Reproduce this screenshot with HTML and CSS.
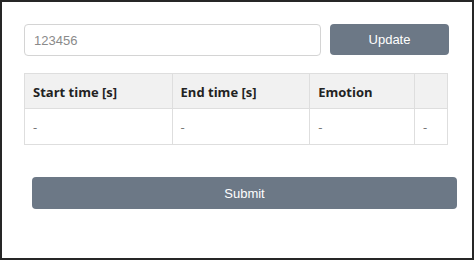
FILE: index.html
```html
<!DOCTYPE html>
<html>
<head>
<meta charset="utf-8">
<link rel="stylesheet" href="styles.css">
</head>
<body>
<div class="frame">
  <div class="search-row">
    <input class="id-input" type="text" placeholder="123456">
    <button class="btn btn-update">Update</button>
  </div>
  <table class="grid">
    <thead>
      <tr>
        <th class="c1">Start time [s]</th>
        <th class="c2">End time [s]</th>
        <th class="c3">Emotion</th>
        <th class="c4"></th>
      </tr>
    </thead>
    <tbody>
      <tr>
        <td>-</td>
        <td>-</td>
        <td>-</td>
        <td>-</td>
      </tr>
    </tbody>
  </table>
  <button class="btn btn-submit">Submit</button>
</div>
</body>
</html>
```
FILE: styles.css
```css
html, body {
  margin: 0;
  padding: 0;
  background: #ffffff;
}
.frame {
  width: 474px;
  height: 260px;
  box-sizing: border-box;
  border: 2px solid #262626;
  padding: 22px 0 0 22px;
  font-family: "Liberation Sans", Arial, sans-serif;
}
.search-row {
  display: flex;
  gap: 9px;
  align-items: flex-start;
}
.id-input {
  width: 297px;
  height: 32px;
  box-sizing: border-box;
  border: 1px solid #d4d4d4;
  border-radius: 4px;
  padding: 0 9px;
  font-family: "Liberation Sans", Arial, sans-serif;
  font-size: 13px;
  color: #555;
  outline: none;
}
.id-input::placeholder {
  color: #8a8a8a;
}
.btn {
  background: #6c7886;
  color: #ffffff;
  border: none;
  border-radius: 4px;
  font-family: "Liberation Sans", Arial, sans-serif;
  font-size: 13px;
  padding: 0;
}
.btn-update {
  width: 119px;
  height: 31px;
}
.grid {
  margin-top: 17px;
  width: 424px;
  border-collapse: collapse;
  font-family: "Open Sans", "Noto Sans", sans-serif;
  font-size: 13px;
}
.grid th, .grid td {
  border: 1px solid #dedede;
  text-align: left;
  padding: 0 8px;
}
.grid th {
  background: #f1f1f1;
  font-weight: 700;
  color: #222;
  height: 33px;
  padding-top: 1px;
}
.grid td {
  height: 35px;
  color: #777;
}
.c1 { width: 131px; }
.c2 { width: 121px; }
.c3 { width: 88px; }
.c4 { width: 16px; }
.btn-submit {
  display: block;
  margin-top: 32px;
  margin-left: 8px;
  width: 425px;
  height: 32px;
}
```
